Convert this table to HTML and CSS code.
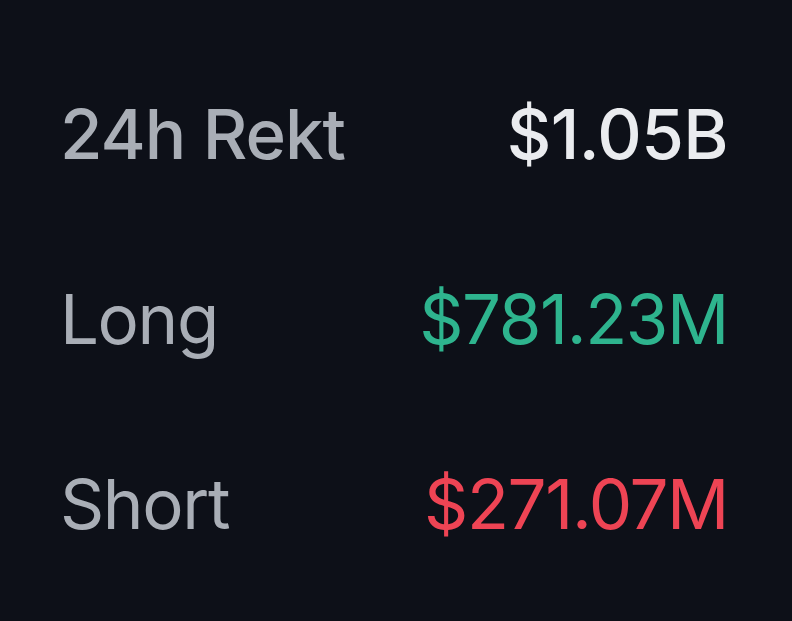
FILE: index.html
```html
<!DOCTYPE html>
<html lang="en">
<head>
<meta charset="utf-8">
<title>24h Rekt</title>
<link rel="stylesheet" href="styles.css">
</head>
<body>
<main class="panel">
  <div class="row">
    <span class="label label-strong">24h Rekt</span>
    <span class="value value-total">$1.05B</span>
  </div>
  <div class="row">
    <span class="label">Long</span>
    <span class="value value-long">$781.23M</span>
  </div>
  <div class="row">
    <span class="label">Short</span>
    <span class="value value-short">$271.07M</span>
  </div>
</main>
</body>
</html>
```
FILE: styles.css
```css
html, body {
  margin: 0;
  padding: 0;
  background: #0d1018;
}
body {
  width: 792px;
  height: 621px;
  overflow: hidden;
  font-family: "Inter", "Noto Sans", sans-serif;
}
.panel {
  padding: 42px 64px 0 60px;
  display: flex;
  flex-direction: column;
}
.row {
  height: 185px;
  line-height: 185px;
  display: flex;
  justify-content: space-between;
  align-items: baseline;
  font-size: 69px;
  letter-spacing: -1.4px;
}
.label {
  color: #a9aeb6;
  font-weight: 400;
}
.label-strong {
  font-weight: 500;
  letter-spacing: -1px;
}
.value {
  font-weight: 400;
}
.value-total {
  color: #eaecef;
  font-weight: 500;
  letter-spacing: -0.6px;
}
.value-long { color: #2eb48e; }
.value-short { color: #ee4454; }
```
